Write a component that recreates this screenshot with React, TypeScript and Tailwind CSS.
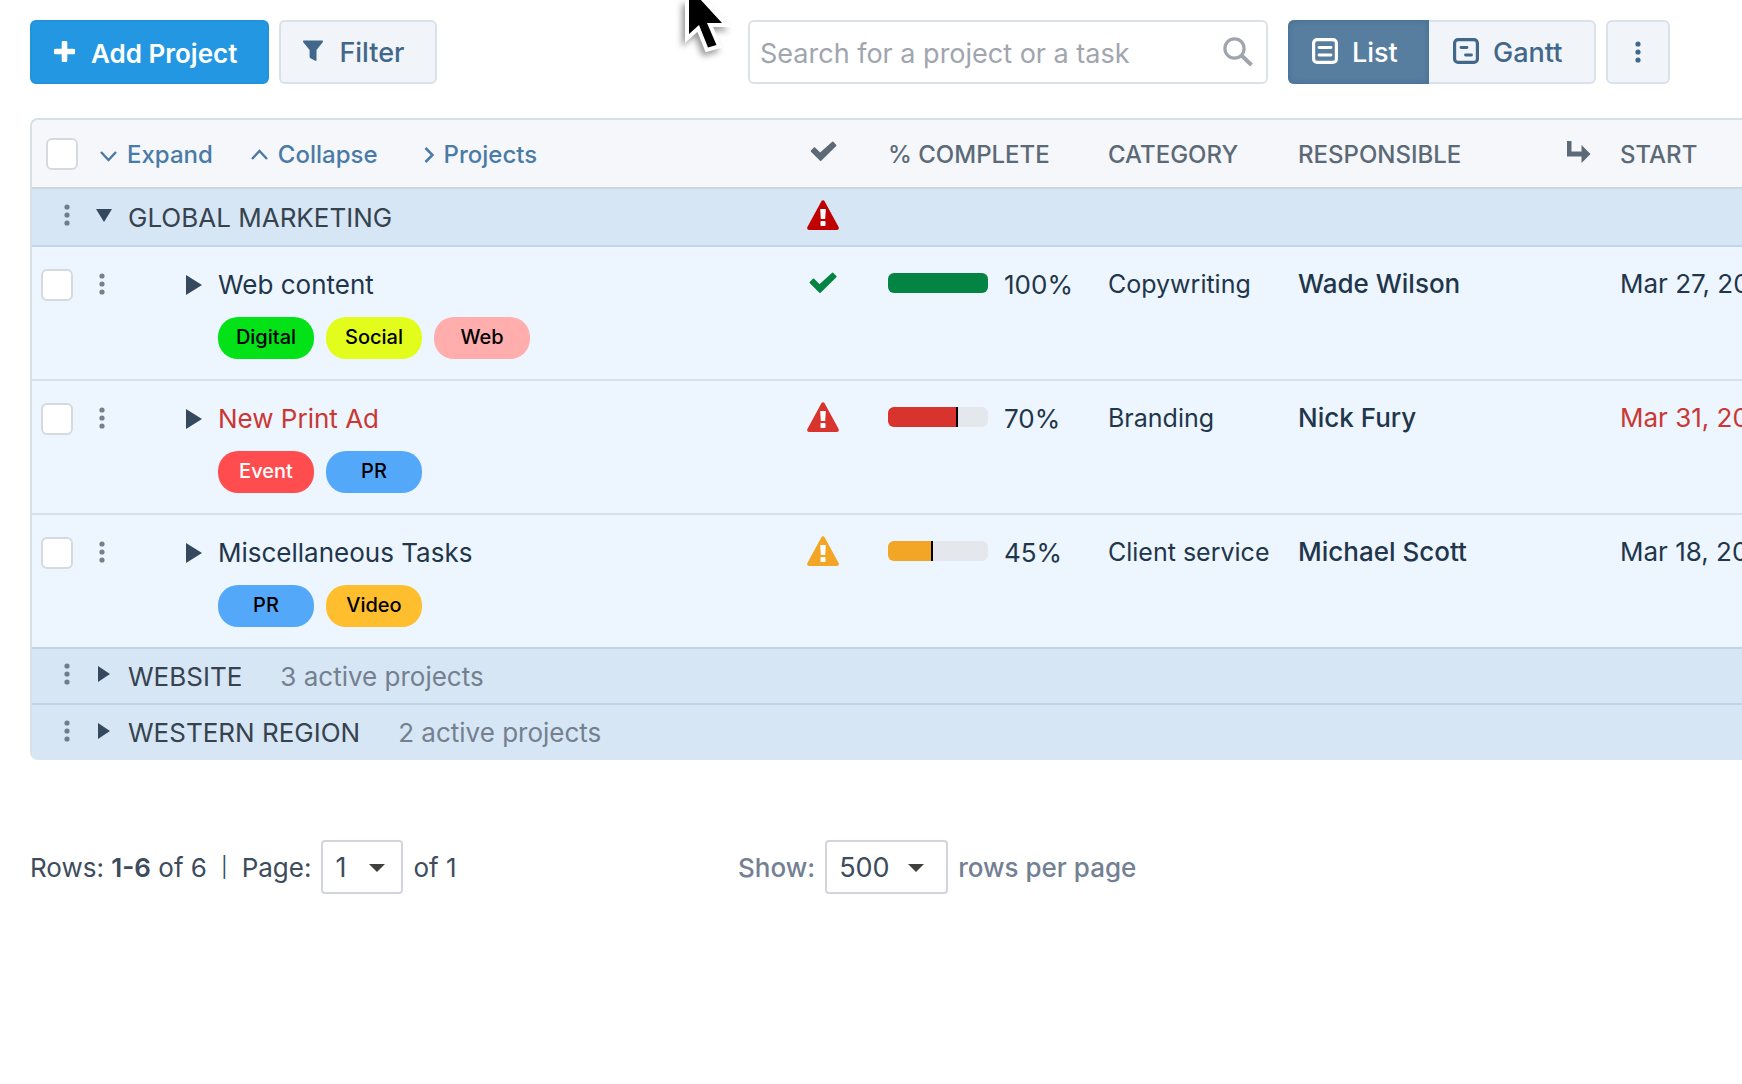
import React from "react";

type Status = "done" | "late" | "warning" | "critical";

interface Tag {
  label: string;
  className: string;
}

interface Project {
  name: string;
  status: Status;
  percent: number;
  category: string;
  responsible: string;
  start: string;
  late?: boolean;
  barClass: string;
  tags: Tag[];
}

const projects: Project[] = [
  {
    name: "Web content",
    status: "done",
    percent: 100,
    category: "Copywriting",
    responsible: "Wade Wilson",
    start: "Mar 27, 2023",
    barClass: "bg-[#038443]",
    tags: [
      { label: "Digital", className: "bg-[#03e217] text-black" },
      { label: "Social", className: "bg-[#e2fd1c] text-black" },
      { label: "Web", className: "bg-[#ffadad] text-black" },
    ],
  },
  {
    name: "New Print Ad",
    status: "late",
    percent: 70,
    category: "Branding",
    responsible: "Nick Fury",
    start: "Mar 31, 2023",
    late: true,
    barClass: "bg-[#d8332d]",
    tags: [
      { label: "Event", className: "bg-[#ff4d4f] text-white" },
      { label: "PR", className: "bg-[#54a8fa] text-black" },
    ],
  },
  {
    name: "Miscellaneous Tasks",
    status: "warning",
    percent: 45,
    category: "Client service",
    responsible: "Michael Scott",
    start: "Mar 18, 2023",
    barClass: "bg-[#f3a525]",
    tags: [
      { label: "PR", className: "bg-[#54a8fa] text-black" },
      { label: "Video", className: "bg-[#ffbe2e] text-black" },
    ],
  },
];

function Dots() {
  return (
    <svg width="6" height="24" viewBox="0 0 6 24" fill="currentColor" aria-hidden="true">
      <circle cx="3" cy="4" r="2.6" />
      <circle cx="3" cy="12" r="2.6" />
      <circle cx="3" cy="20" r="2.6" />
    </svg>
  );
}

function Check({ className }: { className: string }) {
  return (
    <svg viewBox="0 0 28 22" className={className} aria-hidden="true">
      <path
        d="M1.500 10.500 4.500 7.500 10.500 13.300 23.700 1.500 26.700 4.700 11 20Z"
        fill="currentColor"
        stroke="currentColor"
        strokeWidth="1.800"
        strokeLinejoin="round"
      />
    </svg>
  );
}

function Warning({ className }: { className: string }) {
  return (
    <svg width="32" height="30" viewBox="0 0 32 30" className={className} aria-hidden="true">
      <path
        d="M14.4 1.2c.7-1.3 2.5-1.3 3.2 0L31.6 27c.7 1.300-.2 3-1.700 3H2.100C.6 30-.3 28.300.400 27Z"
        fill="currentColor"
      />
      <path d="M13.200 9h5.600l-.6 10h-4.400Z" fill="#fff" />
      <rect x="13.500" y="21" width="5" height="5" rx="0.800" fill="#fff" />
    </svg>
  );
}

function StatusIcon({ status }: { status: Status }) {
  if (status === "done") return <Check className="h-[22px] w-7 text-[#038443]" />;
  if (status === "late") return <Warning className="text-[#d8332d]" />;
  if (status === "warning") return <Warning className="text-[#f3a525]" />;
  return <Warning className="text-[#c00000]" />;
}

function TriangleRight({ className }: { className: string }) {
  return (
    <svg viewBox="0 0 16 20" preserveAspectRatio="none" className={className} aria-hidden="true">
      <path d="M0 0 16 10 0 20Z" fill="currentColor" />
    </svg>
  );
}

function Tick({ label }: { label: string }) {
  return (
    <input
      type="checkbox"
      aria-label={label}
      className="block size-8 shrink-0 appearance-none rounded-md border-2 border-[#d6dae0] bg-white"
    />
  );
}

function GroupRow({ name, count, open }: { name: string; count?: string; open?: boolean }) {
  return (
    <tr className={open ? "h-[58px] border-b-2 border-[#c2d5ec] bg-[#d6e6f5]" : "h-14 border-b-2 border-[#bdd4ea] bg-[#d6e6f5] last:border-b-0"}>
      <td colSpan={open ? 1 : 7} className="p-0">
        <div className="flex items-center pl-8">
          <button type="button" aria-label={`${name} menu`} className="mr-[26px] pb-1 text-[#6f7c8b]">
            <Dots />
          </button>
          <button type="button" aria-label={`Toggle ${name}`} className="flex w-8 items-center pb-1 text-[#34495e]">
            {open ? (
              <svg width="16" height="13" viewBox="0 0 16 13" aria-hidden="true">
                <path d="M0 0H16L8 13Z" fill="currentColor" />
              </svg>
            ) : (
              <TriangleRight className="ml-0.5 h-4 w-3" />
            )}
          </button>
          <span className="whitespace-nowrap text-[26px] text-[#36434f]">{name}</span>
          {count && <span className="ml-[38px] whitespace-nowrap text-[26px] text-[#74808f]">{count}</span>}
        </div>
      </td>
      {open && (
        <>
          <td className="p-0">
            <div className="flex justify-center pb-1">
              <StatusIcon status="critical" />
            </div>
          </td>
          <td colSpan={5} />
        </>
      )}
    </tr>
  );
}

function ProjectRow({ project, last }: { project: Project; last: boolean }) {
  return (
    <tr className={last ? "border-b-2 border-[#bfd3ea] bg-[#edf5fe] align-top" : "border-b-2 border-[#d5e0ea] bg-[#edf5fe] align-top"}>
      <td className="p-0">
        <div className="flex items-start pl-[9px] pt-[22px] pb-5">
          <Tick label={`Select ${project.name}`} />
          <button type="button" aria-label={`${project.name} menu`} className="ml-[26px] mt-[3px] text-[#74808f]">
            <Dots />
          </button>
          <button type="button" aria-label={`Toggle ${project.name}`} className="ml-[81px] mt-1.5 text-[#34495e]">
            <TriangleRight className="h-5 w-4" />
          </button>
          <div className="ml-4">
            <a
              href="#"
              className={project.late ? "block whitespace-nowrap leading-8 text-[#c93832]" : "block whitespace-nowrap leading-8 text-[#1f364b]"}
            >
              {project.name}
            </a>
            <div className="mt-4 flex gap-3">
              {project.tags.map((tag) => (
                <span
                  key={tag.label}
                  className={`flex h-[42px] w-24 items-center justify-center rounded-[20px] pb-0.5 text-[20px] font-medium ${tag.className}`}
                >
                  {tag.label}
                </span>
              ))}
            </div>
          </div>
        </div>
      </td>
      <td className="p-0 pt-5">
        <div className="flex h-8 items-center justify-center">
          <StatusIcon status={project.status} />
        </div>
      </td>
      <td className="p-0 pt-5 pl-[30px]">
        <div className="flex h-8 items-center text-[#1f364b]">
          <div className="h-5 w-[100px] overflow-hidden rounded-md bg-[#e4e7eb]">
            <div
              className={`h-full ${project.barClass} ${project.percent < 100 ? "border-r-2 border-black" : ""}`}
              style={{ width: `${project.percent}%` }}
            />
          </div>
          <span className="ml-4 pt-0.5">{project.percent}%</span>
        </div>
      </td>
      <td className="whitespace-nowrap p-0 pt-[21px] pl-[10px] text-[25px] leading-8 text-[#1f364b]">{project.category}</td>
      <td className="whitespace-nowrap p-0 pt-[21px] pl-[10px] font-medium leading-8 text-[#1f364b]">{project.responsible}</td>
      <td />
      <td
        className={
          project.late
            ? "whitespace-nowrap p-0 pt-[21px] pl-[10px] leading-8 text-[#c93832]"
            : "whitespace-nowrap p-0 pt-[21px] pl-[10px] leading-8 text-[#1f364b]"
        }
      >
        {project.start}
      </td>
    </tr>
  );
}

function Caret({ className }: { className: string }) {
  return (
    <svg width="16" height="8" viewBox="0 0 16 8" aria-hidden="true" className={`pointer-events-none absolute top-6 ${className}`}>
      <path d="M0 0H16L8 8Z" fill="#40403c" />
    </svg>
  );
}

function Toolbar() {
  return (
    <div className="flex h-16 items-stretch pr-[72px] text-[27px] font-medium">
      <button type="button" className="flex shrink-0 items-center rounded-md border-2 border-[#2192dc] bg-[#2497e3] pl-[22px] pr-[30px] pt-0.5 text-[26px] font-semibold text-white">
        <svg width="21" height="21" viewBox="0 0 21 21" aria-hidden="true" className="mr-4 mb-1">
          <path d="M10.500 2V19M2 10.500H19" stroke="currentColor" strokeWidth="5.600" strokeLinecap="round" />
        </svg>
        Add Project
      </button>
      <button type="button" className="ml-2.5 flex shrink-0 items-center rounded-md border-2 border-[#d9e1ea] bg-[#f1f5f9] pl-[22px] pr-[30px] pt-0.5 text-[#41678a]">
        <svg width="20" height="22" viewBox="0 0 20 22" aria-hidden="true" className="mr-4 mb-1">
          <path d="M0 1.500C0 .8.500.5 1 .5H19C19.500.5 20 .8 20 1.500 20 2 19.800 2.300 19.500 2.600L13.500 10V20C13.500 20.800 13 21.200 12.300 20.800L7.500 18.200C6.800 17.800 6.600 17.400 6.600 16.700V10L.5 2.600C.2 2.300 0 2 0 1.500Z" fill="currentColor" />
        </svg>
        Filter
      </button>
      <div className="relative ml-auto w-[520px]">
        <input
          type="search"
          aria-label="Search for a project or a task"
          placeholder="Search for a project or a task"
          className="h-full w-full rounded-md border-2 border-[#dce1e6] bg-white pl-[10px] pr-14 pt-0.5 font-normal placeholder:text-[#a0a5ae]"
        />
        <svg width="32" height="32" viewBox="0 0 32 32" fill="none" stroke="#a0a5ad" aria-hidden="true" className="absolute right-3.5 top-4">
          <circle cx="12.500" cy="12.500" r="9.600" strokeWidth="3.200" />
          <path d="M19 19 29.500 29" strokeWidth="4" />
        </svg>
      </div>
      <div className="ml-5 flex shrink-0">
        <button type="button" aria-pressed="true" className="flex w-[141px] items-center rounded-l-md bg-[#587e9f] pl-6 pt-0.5 text-white shadow-[inset_0_0_6px_#3f6c90]">
          <svg width="26" height="26" viewBox="0 0 26 26" fill="none" stroke="currentColor" aria-hidden="true" className="mr-3.5 mb-1">
            <rect x="1.600" y="1.600" width="22.800" height="22.800" rx="3.500" strokeWidth="3.200" />
            <path d="M7 9.500H19M7 17H19" strokeWidth="2.800" strokeLinecap="round" />
          </svg>
          List
        </button>
        <button type="button" aria-pressed="false" className="flex w-[167px] items-center rounded-r-md border-2 border-l-0 border-[#d9e1ea] bg-[#f1f5f9] pl-6 pt-0.5 text-[#41678a]">
          <svg width="26" height="26" viewBox="0 0 26 26" fill="none" stroke="currentColor" aria-hidden="true" className="mr-3.5 mb-1">
            <rect x="1.600" y="1.600" width="22.800" height="22.800" rx="3.500" strokeWidth="3.200" />
            <path d="M8 9.500H14M12.500 17H18.500" strokeWidth="2.800" strokeLinecap="round" />
          </svg>
          Gantt
        </button>
      </div>
      <button type="button" aria-label="More options" className="ml-2.5 flex w-16 shrink-0 items-center justify-center rounded-md border-2 border-[#d9e1ea] bg-[#f1f5f9] text-[#41678a]">
        <Dots />
      </button>
    </div>
  );
}

function HeaderCell({ children }: { children?: React.ReactNode }) {
  return <th className="whitespace-nowrap p-0 pt-0.5 pl-[10px] text-left font-medium">{children}</th>;
}

function ProjectTable() {
  return (
    <div className="mt-[34px] overflow-hidden rounded-l-lg border-2 border-r-0 border-b-0 border-[#d5e0e8]">
      <table className="w-full table-fixed border-collapse text-[26px]">
        <colgroup>
          <col />
          <col className="w-[70px]" />
          <col className="w-[240px]" />
          <col className="w-[190px]" />
          <col className="w-[260px]" />
          <col className="w-[62px]" />
          <col className="w-[132px]" />
        </colgroup>
        <thead>
          <tr className="h-[68px] border-b-2 border-[#cdd5df] bg-[#f5f7fb] text-[24px] text-[#5c6a77]">
            <th className="p-0 font-medium">
              <div className="flex items-center pl-[14px] text-[#4a7ba6]">
                <Tick label="Select all" />
                <button type="button" className="ml-[22px] flex items-center gap-2.5 pt-0.5">
                  <svg width="17" height="11" viewBox="0 0 17 11" fill="none" stroke="currentColor" strokeWidth="2.400" aria-hidden="true" className="mt-1">
                    <path d="M1 1 8.500 9 16 1" />
                  </svg>
                  Expand
                </button>
                <button type="button" className="ml-[38px] flex items-center gap-2.5 pt-0.5">
                  <svg width="17" height="11" viewBox="0 0 17 11" fill="none" stroke="currentColor" strokeWidth="2.400" aria-hidden="true">
                    <path d="M1 10 8.500 2 16 10" />
                  </svg>
                  Collapse
                </button>
                <button type="button" className="ml-[46px] flex items-center gap-2.5 pt-0.5">
                  <svg width="10" height="16" viewBox="0 0 10 16" fill="none" stroke="currentColor" strokeWidth="2.600" aria-hidden="true">
                    <path d="M1.500 1 8.500 8 1.500 15" />
                  </svg>
                  Projects
                </button>
              </div>
            </th>
            <th className="p-0" aria-label="Status">
              <div className="flex justify-center pb-1">
                <Check className="h-[21px] w-[27px] text-[#5c6a77]" />
              </div>
            </th>
            <th className="whitespace-nowrap p-0 pt-0.5 pl-[30px] text-left font-medium">% COMPLETE</th>
            <HeaderCell>CATEGORY</HeaderCell>
            <HeaderCell>RESPONSIBLE</HeaderCell>
            <th className="p-0" aria-label="Dependency">
              <div className="flex justify-center pb-1">
                <svg width="24" height="22" viewBox="0 0 24 22" fill="#5c6a77" aria-hidden="true">
                  <path d="M0 0H4.500V10.500H14.500V4L23.500 13 14.500 22V15.500H0Z" />
                </svg>
              </div>
            </th>
            <HeaderCell>START</HeaderCell>
          </tr>
        </thead>
        <tbody>
          <GroupRow name="GLOBAL MARKETING" open />
          {projects.map((p, i) => (
            <ProjectRow key={p.name} project={p} last={i === projects.length - 1} />
          ))}
          <GroupRow name="WEBSITE" count="3 active projects" />
          <GroupRow name="WESTERN REGION" count="2 active projects" />
        </tbody>
      </table>
    </div>
  );
}

function Pagination() {
  return (
    <div className="mt-20 flex items-center whitespace-nowrap text-[26px] text-[#3c4c5d]">
      <div className="flex w-[708px] items-center">
        <span>
          Rows: <b className="font-semibold">1-6</b> of 6
        </span>
        <span className="mx-3.5 text-[20px]">|</span>
        <label htmlFor="page">Page:</label>
        <div className="relative mx-2.5">
          <select id="page" className="block h-[54px] w-[82px] appearance-none rounded border-2 border-[#d3d5dc] bg-white pl-3 pt-0.5 text-[27px]">
            <option>1</option>
          </select>
          <Caret className="right-[18px]" />
        </div>
        <span>of 1</span>
      </div>
      <div className="flex items-center font-medium text-[#738093]">
        <label htmlFor="rows">Show:</label>
        <div className="relative mx-2.5">
          <select id="rows" className="block h-[54px] w-[123px] appearance-none rounded border-2 border-[#d3d5dc] bg-white pl-3 pt-0.5 text-[27px] font-normal text-[#3c4c5d]">
            <option>500</option>
          </select>
          <Caret className="right-6" />
        </div>
        <span>rows per page</span>
      </div>
    </div>
  );
}

export default function App() {
  return (
    <main className="relative min-h-screen overflow-hidden bg-white pt-5 pl-[30px] font-['Inter',sans-serif]">
      <Toolbar />
      <ProjectTable />
      <Pagination />
      <svg width="60" height="64" viewBox="0 0 60 64" aria-hidden="true" className="pointer-events-none absolute left-[676px] top-0 drop-shadow-[-3px_4px_3px_rgba(0,0,0,0.4)]">
        <path d="M13-13V34L23 25 32 47.500 40.500 45 31 23H46Z" fill="#000" stroke="#fff" strokeWidth="8" paintOrder="stroke" />
      </svg>
    </main>
  );
}
